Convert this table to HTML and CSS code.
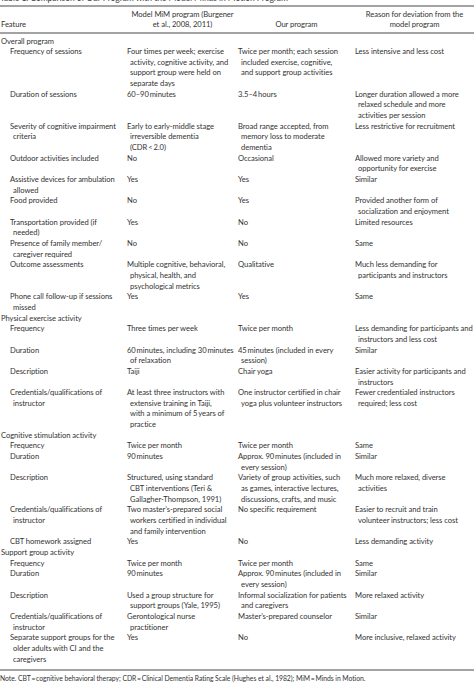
FILE: index.html
```html
<!DOCTYPE html>
<html lang="en">
<head>
<meta charset="utf-8">
<title>Table 1</title>
<link rel="stylesheet" href="styles.css">
</head>
<body>
<div class="caption">Table 1. Comparison of Our Program with the Model Minds in Motion Program</div>
<table class="tbl">
  <colgroup>
    <col class="c1"><col class="c2"><col class="c3"><col class="c4">
  </colgroup>
  <thead>
    <tr>
      <th class="hl">Feature</th>
      <th>Model MiM program (Burgener<br>et al., 2008, 2011)</th>
      <th>Our program</th>
      <th>Reason for deviation from the<br>model program</th>
    </tr>
  </thead>
  <tbody class="first">
    <tr class="cat"><td colspan="4">Overall program</td></tr>
    <tr><td>Frequency of sessions</td><td>Four times per week; exercise<br>activity, cognitive activity, and<br>support group were held on<br>separate days</td><td>Twice per month; each session<br>included exercise, cognitive,<br>and support group activities</td><td>Less intensive and less cost</td></tr>
    <tr><td>Duration of sessions</td><td>60–90&#8201;minutes</td><td>3.5–4&#8201;hours</td><td>Longer duration allowed a more<br>relaxed schedule and more<br>activities per session</td></tr>
    <tr><td>Severity of cognitive impairment<br>criteria</td><td>Early to early-middle stage<br>irreversible dementia<br>(CDR&#8201;&lt;&#8201;2.0)</td><td>Broad range accepted, from<br>memory loss to moderate<br>dementia</td><td>Less restrictive for recruitment</td></tr>
    <tr><td>Outdoor activities included</td><td>No</td><td>Occasional</td><td>Allowed more variety and<br>opportunity for exercise</td></tr>
    <tr><td>Assistive devices for ambulation<br>allowed</td><td>Yes</td><td>Yes</td><td>Similar</td></tr>
    <tr><td>Food provided</td><td>No</td><td>Yes</td><td>Provided another form of<br>socialization and enjoyment</td></tr>
    <tr><td>Transportation provided (if<br>needed)</td><td>Yes</td><td>No</td><td>Limited resources</td></tr>
    <tr><td>Presence of family member/<br>caregiver required</td><td>No</td><td>No</td><td>Same</td></tr>
    <tr><td>Outcome assessments</td><td>Multiple cognitive, behavioral,<br>physical, health, and<br>psychological metrics</td><td>Qualitative</td><td>Much less demanding for<br>participants and instructors</td></tr>
    <tr><td>Phone call follow-up if sessions<br>missed</td><td>Yes</td><td>Yes</td><td>Same</td></tr>

    <tr class="cat"><td colspan="4">Physical exercise activity</td></tr>
    <tr><td>Frequency</td><td>Three times per week</td><td>Twice per month</td><td>Less demanding for participants and<br>instructors and less cost</td></tr>
    <tr><td>Duration</td><td>60&#8201;minutes, including 30&#8201;minutes<br>of relaxation</td><td>45&#8201;minutes (included in every<br>session)</td><td>Similar</td></tr>
    <tr><td>Description</td><td>Taiji</td><td>Chair yoga</td><td>Easier activity for participants and<br>instructors</td></tr>
    <tr><td>Credentials/qualifications of<br>instructor</td><td>At least three instructors with<br>extensive training in Taiji,<br>with a minimum of 5&#8201;years of<br>practice</td><td>One instructor certified in chair<br>yoga plus volunteer instructors</td><td>Fewer credentialed instructors<br>required; less cost</td></tr>

    <tr class="cat"><td colspan="4">Cognitive stimulation activity</td></tr>
    <tr><td>Frequency</td><td>Twice per month</td><td>Twice per month</td><td>Same</td></tr>
    <tr><td>Duration</td><td>90&#8201;minutes</td><td>Approx. 90&#8201;minutes (included in<br>every session)</td><td>Similar</td></tr>
    <tr><td>Description</td><td>Structured, using standard<br>CBT interventions (Teri &amp;<br>Gallagher-Thompson, 1991)</td><td>Variety of group activities, such<br>as games, interactive lectures,<br>discussions, crafts, and music</td><td>Much more relaxed, diverse<br>activities</td></tr>
    <tr><td>Credentials/qualifications of<br>instructor</td><td>Two master’s-prepared social<br>workers certified in individual<br>and family intervention</td><td>No specific requirement</td><td>Easier to recruit and train<br>volunteer instructors; less cost</td></tr>
    <tr><td>CBT homework assigned</td><td>Yes</td><td>No</td><td>Less demanding activity</td></tr>

    <tr class="cat"><td colspan="4">Support group activity</td></tr>
    <tr><td>Frequency</td><td>Twice per month</td><td>Twice per month</td><td>Same</td></tr>
    <tr><td>Duration</td><td>90&#8201;minutes</td><td>Approx. 90&#8201;minutes (included in<br>every session)</td><td>Similar</td></tr>
    <tr><td>Description</td><td>Used a group structure for<br>support groups (Yale, 1995)</td><td>Informal socialization for patients<br>and caregivers</td><td>More relaxed activity</td></tr>
    <tr><td>Credentials/qualifications of<br>instructor</td><td>Gerontological nurse<br>practitioner</td><td>Master’s-prepared counselor</td><td>Similar</td></tr>
    <tr class="last"><td>Separate support groups for the<br>older adults with CI and the<br>caregivers</td><td>Yes</td><td>No</td><td>More inclusive, relaxed activity</td></tr>
  </tbody>
</table>
<p class="note">Note. CBT&#8201;=&#8201;cognitive behavioral therapy; CDR&#8201;=&#8201;Clinical Dementia Rating Scale (Hughes et al., 1982); MiM&#8201;=&#8201;Minds in Motion.</p>
</body>
</html>
```

FILE: styles.css
```css
html, body {
  margin: 0;
  padding: 0;
  background: #ffffff;
}

body {
  width: 474px;
  height: 684px;
  overflow: hidden;
  font-family: Lato, "Open Sans", "Liberation Sans", sans-serif;
  font-size: 7.6px;
  letter-spacing: -0.05px;
  color: #333333;
}

.caption {
  margin-top: -8px;
  height: 13px;
  line-height: 12px;
  font-size: 8.5px;
  color: #444444;
  white-space: nowrap;
}

.tbl {
  width: 474px;
  border-collapse: collapse;
  table-layout: fixed;
  border-top: 2px solid #a3a3a3;
}

.c1 { width: 127px; }
.c2 { width: 111px; }
.c3 { width: 117px; }
.c4 { width: 119px; }

.tbl th {
  font-weight: normal;
  text-align: center;
  vertical-align: bottom;
  line-height: 9.5px;
  padding: 3px 0 3px 0;
  border-bottom: 2px solid #a3a3a3;
  white-space: nowrap;
}

.tbl th.hl {
  text-align: left;
  padding-left: 1px;
}

.tbl td {
  padding: 0 0 0 3px;
  text-indent: -3px;
  vertical-align: top;
  line-height: 10.66px;
  white-space: nowrap;
}

.tbl td:first-child {
  padding-left: 13px;
}

.tbl tr.cat td {
  padding-left: 1px;
  text-indent: 0;
}

.tbl tbody tr:first-child td {
  padding-top: 1.5px;
}

.tbl tr.last td {
  padding-bottom: 5px;
  border-bottom: 2px solid #a3a3a3;
}

.note {
  margin: 3px 0 0 0;
  font-size: 6.8px;
  line-height: 9px;
  white-space: nowrap;
}
```
